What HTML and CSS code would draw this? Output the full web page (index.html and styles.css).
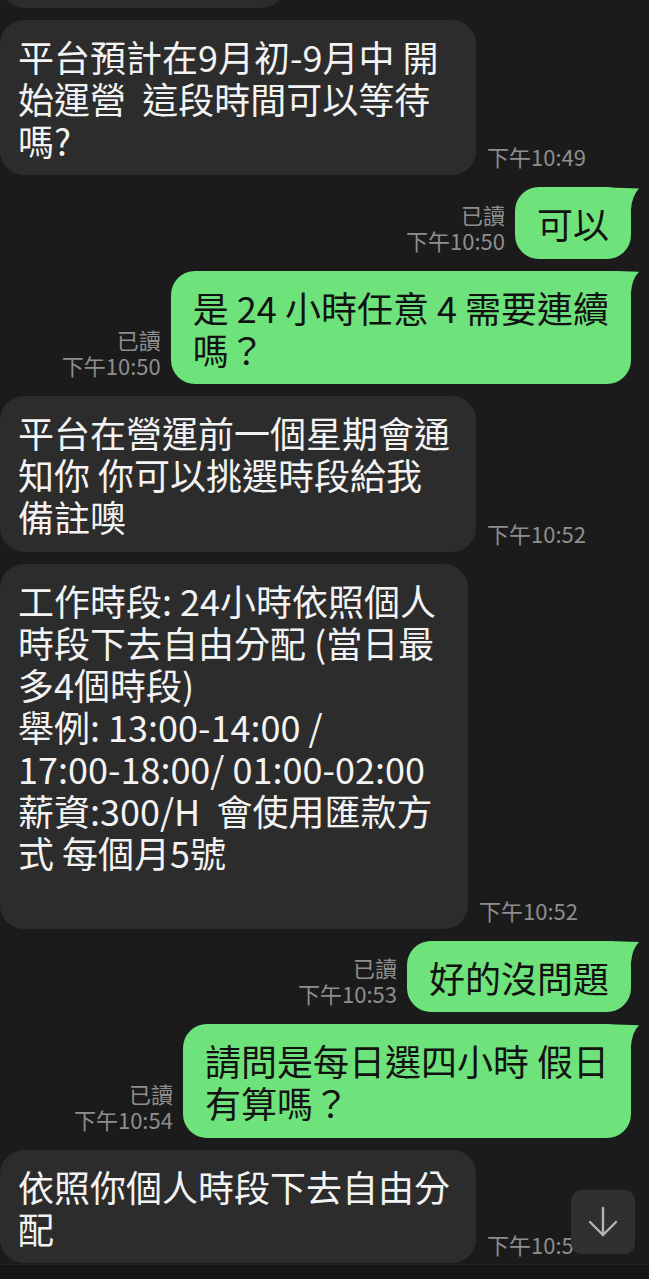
FILE: index.html
```html
<!DOCTYPE html>
<html lang="zh-Hant">
<head>
<meta charset="utf-8">
<title>Chat</title>
<link rel="stylesheet" href="styles.css">
</head>
<body>
<div class="chat">
  <div class="row in">
    <div class="bubble in stub"></div>
  </div>

  <div class="row in">
    <div class="bubble in">平台預計在9月初-9月中 開<br>始運營&nbsp; 這段時間可以等待<br>嗎?</div>
    <div class="meta"><span>下午10:49</span></div>
  </div>

  <div class="row out">
    <div class="meta"><span>已讀</span><span>下午10:50</span></div>
    <div class="bubble out">可以</div>
  </div>

  <div class="row out">
    <div class="meta"><span>已讀</span><span>下午10:50</span></div>
    <div class="bubble out">是 24 小時任意 4 需要連續<br>嗎？</div>
  </div>

  <div class="row in">
    <div class="bubble in">平台在營運前一個星期會通<br>知你 你可以挑選時段給我<br>備註噢</div>
    <div class="meta"><span>下午10:52</span></div>
  </div>

  <div class="row in">
    <div class="bubble in narrow">工作時段: 24小時依照個人<br>時段下去自由分配 (當日最<br>多4個時段)<br>舉例: 13:00-14:00 /<br>17:00-18:00/ 01:00-02:00<br>薪資:300/H&nbsp; 會使用匯款方<br>式 每個月5號<br>&nbsp;</div>
    <div class="meta"><span>下午10:52</span></div>
  </div>

  <div class="row out">
    <div class="meta"><span>已讀</span><span>下午10:53</span></div>
    <div class="bubble out">好的沒問題</div>
  </div>

  <div class="row out">
    <div class="meta"><span>已讀</span><span>下午10:54</span></div>
    <div class="bubble out">請問是每日選四小時 假日<br>有算嗎？</div>
  </div>

  <div class="row in">
    <div class="bubble in">依照你個人時段下去自由分<br>配</div>
    <div class="meta"><span>下午10:54</span></div>
  </div>
</div>

<div class="inputbar"></div>

<button class="scroll-down" aria-label="scroll to bottom">
  <svg width="30" height="32" viewBox="0 0 30 32" fill="none" stroke="#b4b4b4" stroke-width="2.4" stroke-linecap="round" stroke-linejoin="round">
    <path d="M15 2 V29"/>
    <path d="M2 16 L15 29 L28 16"/>
  </svg>
</button>
</body>
</html>
```

FILE: styles.css
```css
html, body {
  margin: 0;
  padding: 0;
  background: #1b1b1b;
  overflow: hidden;
}

body {
  width: 649px;
  height: 1279px;
  position: relative;
  font-family: "Noto Sans CJK TC", "Noto Sans", sans-serif;
}

.chat {
  display: flex;
  flex-direction: column;
  gap: 12px;
}

.row {
  display: flex;
  align-items: flex-end;
}

.row.in {
  justify-content: flex-start;
  gap: 11px;
}

.row.out {
  justify-content: flex-end;
  gap: 10px;
  padding-right: 18px;
}

.bubble {
  position: relative;
  box-sizing: border-box;
  font-size: 36px;
  line-height: 42px;
  padding: 15px 22px 14.4px;
  border-radius: 24px;
  white-space: nowrap;
}

.bubble.in {
  background: #2c2c2c;
  color: #f3f3f3;
  width: 476px;
  padding-left: 18px;
}

.bubble.in.narrow {
  width: 468px;
}

.bubble.in.stub {
  width: 285px;
  height: 48px;
  padding: 0;
  margin-top: -40px;
}

.bubble.out {
  background: #6ee27b;
  color: #121212;
}

.bubble.out::after {
  content: "";
  position: absolute;
  top: 0;
  right: -8px;
  width: 30px;
  height: 22px;
  background: #6ee27b;
  clip-path: path("M0 0 L30 1 Q23 8 22 22 L0 22 Z");
}

.meta {
  display: flex;
  flex-direction: column;
  padding-bottom: 6px;
  font-size: 22px;
  line-height: 26px;
  color: #8e8e8e;
  white-space: nowrap;
}

.row.out .meta {
  align-items: flex-end;
}

.inputbar {
  position: absolute;
  left: 0;
  right: 0;
  bottom: 0;
  height: 14px;
  background: #151515;
  border-top: 1px solid #222222;
}

.scroll-down {
  position: absolute;
  right: 14px;
  bottom: 25px;
  width: 64px;
  height: 64px;
  border: none;
  border-radius: 11px;
  background: #303030;
  display: flex;
  align-items: center;
  justify-content: center;
  padding: 0;
}
```
